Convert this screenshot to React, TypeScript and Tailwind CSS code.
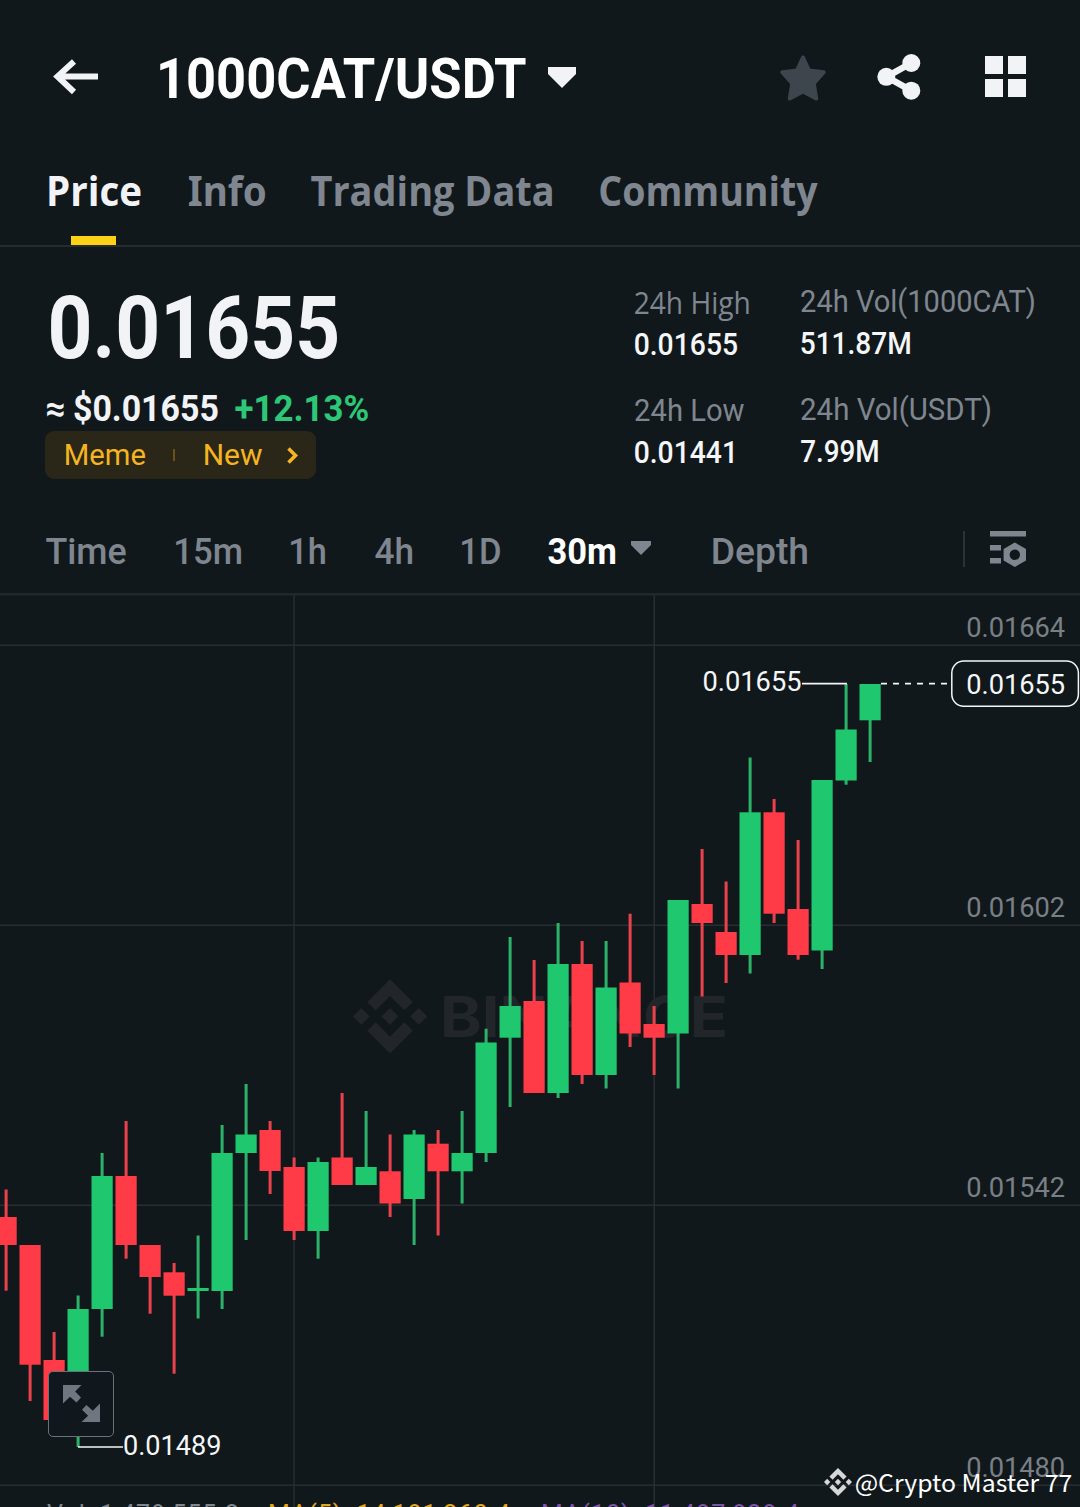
import { useLayoutEffect, useRef, useState } from "react";

/* Single line of text whose glyphs fill an exact width. */
function Fit({ w, className = "", children }: { w: number; className?: string; children: string }) {
  const ref = useRef<HTMLSpanElement>(null);
  const [transform, setTransform] = useState("none");
  useLayoutEffect(() => {
    const el = ref.current;
    const ctx = document.createElement("canvas").getContext("2d");
    if (!el || !ctx) return;
    const s = getComputedStyle(el);
    /* measured at ten times the size, to keep sub-pixel precision */
    ctx.font = `${s.fontWeight} ${parseFloat(s.fontSize) * 10}px ${s.fontFamily}`;
    const m = ctx.measureText(children);
    const left = m.actualBoundingBoxLeft / 10;
    const k = w / (left + m.actualBoundingBoxRight / 10);
    setTransform(`translateX(${left * k}px) scaleX(${k})`);
  }, [w, children]);
  return (
    <span className="block shrink-0" style={{ width: w }}>
      <span ref={ref} className={`inline-block origin-left whitespace-nowrap align-top ${className}`} style={{ transform }}>
        {children}
      </span>
    </span>
  );
}

const LOGO =
  "M16.624 13.9202l2.7175 2.7154-7.353 7.353-7.353-7.352 2.7175-2.7164 4.6355 4.6595 4.6356-4.6595zm4.6366-4.6366L24 12l-2.7154 2.7164L18.5682 12l2.6924-2.7164zm-9.272.001l2.7163 2.6914-2.7164 2.7174v-.001L9.2721 12l2.7164-2.7154zm-9.2722-.001L5.4088 12l-2.6914 2.6924L0 12l2.7164-2.7164zM11.9885.0115l7.353 7.329-2.7174 2.7154-4.6356-4.6356-4.6355 4.6595-2.7174-2.7154 7.353-7.353z";

/* direction, high, body top, body bottom, low */
type Candle = ["u" | "d", number, number, number, number];
const CANDLES: Candle[] = [
  ["d", 1189.5, 1217, 1245, 1290.7],
  ["d", 1245, 1245, 1364.7, 1401],
  ["d", 1332, 1360, 1420, 1420],
  ["u", 1295.5, 1309, 1410, 1447],
  ["u", 1153, 1176, 1309, 1336.7],
  ["d", 1121, 1176, 1245, 1258.7],
  ["d", 1245, 1245, 1277, 1313.7],
  ["d", 1263, 1272.3, 1295.7, 1373.7],
  ["u", 1235.5, 1288, 1291, 1318.5],
  ["u", 1125, 1153, 1291, 1309],
  ["u", 1084, 1134.5, 1153, 1240],
  ["d", 1121, 1130, 1171, 1194],
  ["d", 1157.5, 1167, 1231, 1240],
  ["u", 1157.5, 1162, 1231, 1258.7],
  ["d", 1093, 1157.5, 1185, 1185],
  ["u", 1111, 1167, 1185, 1185],
  ["d", 1134.5, 1171.3, 1203.5, 1217],
  ["u", 1130, 1134.5, 1199, 1245],
  ["d", 1130, 1143.7, 1171.3, 1235.5],
  ["u", 1111, 1153, 1171.3, 1203.5],
  ["u", 1028.7, 1042.5, 1153, 1162],
  ["u", 937, 1006, 1037.7, 1107],
  ["d", 960, 1001, 1093, 1093],
  ["u", 923, 964, 1093, 1098],
  ["d", 941, 964, 1075, 1084],
  ["u", 941, 987.5, 1075, 1088.5],
  ["d", 913.7, 982.5, 1033.5, 1047],
  ["d", 1006, 1024, 1037.7, 1075],
  ["u", 900, 900, 1033.5, 1088.5],
  ["d", 849, 904, 923, 996.5],
  ["d", 881.5, 932, 955, 983],
  ["u", 757.5, 812.3, 955, 973.5],
  ["d", 799, 812.3, 913.7, 923],
  ["d", 840, 909, 955, 959.7],
  ["u", 780, 780, 950.5, 969],
  ["u", 684, 729.5, 780.5, 784.7],
  ["u", 684, 684, 720.3, 762],
];

const AXIS: [string, number][] = [
  ["0.01664", 637],
  ["0.01602", 917],
  ["0.01542", 1197],
  ["0.01480", 1477],
];

function Header() {
  return (
    <header className="flex h-[155px] items-center pl-[53px] pr-[54px] text-[#f1f3f6]">
      <svg className="-mt-px h-9 w-[45px]" viewBox="0 0 45 36" fill="none" stroke="currentColor" strokeWidth="6">
        <path d="M45 17.5H5M21 2.5L4.5 17.5L21 33" />
      </svg>
      <h1 className="ml-[62px] pt-[3px] font-bold text-white">
        <Fit w={366} className="text-[56px] leading-[64px]">1000CAT/USDT</Fit>
      </h1>
      <svg className="ml-[22px] h-[21px] w-7" viewBox="0 0 28 21" fill="currentColor">
        <path d="M0 0H28V7L14 21L0 7Z" />
      </svg>
      <svg className="ml-auto h-[46px] w-[46px] text-[#3e464d]" viewBox="0 0 46 46" fill="currentColor" stroke="currentColor" strokeWidth="4" strokeLinejoin="round">
        <path d="M23 2.5L29 15.5L43.7 17.3L33.8 28.5L36.2 43.5L23 36.5L9.8 43.5L12.2 28.5L2.3 17.3L17 15.5Z" />
      </svg>
      <svg className="-mt-px ml-[51px] h-[46px] w-[44px]" viewBox="0 0 44 46" fill="currentColor">
        <path d="M34.3 9L9.5 22.8L34.3 36.7" fill="none" stroke="currentColor" strokeWidth="6.5" />
        <circle cx="34.3" cy="9" r="9" />
        <circle cx="9.3" cy="22.8" r="9" />
        <circle cx="34.3" cy="36.7" r="9" />
      </svg>
      <div className="-mt-[2px] ml-16 grid w-[41px] grid-cols-2 gap-[5px]">
        <i className="h-[18px] bg-current" />
        <i className="h-[18px] bg-current" />
        <i className="h-[18px] bg-current" />
        <i className="h-[18px] bg-current" />
      </div>
    </header>
  );
}

function Tabs() {
  const tab = "text-[42px] leading-[48px]";
  return (
    <nav className="flex h-[92px] border-b-2 border-[#262b2f] pl-[49px] pt-[11px] font-['Open_Sans',sans-serif] font-bold text-[#7f868f]">
      <div className="w-[92px] text-[#f1f3f6]">
        <Fit w={92} className={tab}>Price</Fit>
        <div className="ml-[22px] mt-[22px] h-[9px] w-[45px] bg-[#fcd116]" />
      </div>
      <div className="ml-12 font-['Noto_Sans',sans-serif]">
        <Fit w={76} className={tab}>Info</Fit>
      </div>
      <div className="ml-[46px]">
        <Fit w={241} className={tab}>Trading Data</Fit>
      </div>
      <div className="ml-12">
        <Fit w={218} className={tab}>Community</Fit>
      </div>
    </nav>
  );
}

function Stat({ label, value, lw, vw, open }: { label: string; value: string; lw: number; vw: number; open?: boolean }) {
  return (
    <div>
      <div className={open ? "-mt-px pb-px font-['Open_Sans',sans-serif] text-[#7f868f]" : "text-[#7f868f]"}>
        <Fit w={lw} className="text-[31px] leading-9">{label}</Fit>
      </div>
      <div className="mt-1.5 font-medium text-[#f4f6f8]">
        <Fit w={vw} className="text-[31px] leading-9">{value}</Fit>
      </div>
    </div>
  );
}

function Summary() {
  return (
    <section className="flex h-[263px] justify-between pl-[45px] pr-[45px]">
      <div className="pt-[38px]">
        <div className="ml-[5px] font-bold text-[#f1f3f6]">
          <Fit w={288} className="text-[87px] leading-[87px]">0.01655</Fit>
        </div>
        <div className="mt-[17px] flex h-10 gap-[17px] pl-[2px] font-bold">
          <div className="flex gap-[10px] text-[#f1f3f6]">
            <Fit w={17} className="text-[36px] leading-10">≈</Fit>
            <Fit w={144} className="text-[36px] leading-10">$0.01655</Fit>
          </div>
          <div className="text-[#2cc878]">
            <Fit w={133} className="text-[36px] leading-10">+12.13%</Fit>
          </div>
        </div>
        <div className="mt-[2px] flex h-12 w-[271px] items-center rounded-[9px] bg-[#2a2718] pl-[21px] text-[#f5b422]">
          <Fit w={79} className="text-[30px] leading-[48px]">Meme</Fit>
          <div className="ml-[28px] h-3 w-[2px] bg-[#6b5219]" />
          <div className="ml-[30px]">
            <Fit w={57} className="text-[30px] leading-[48px]">New</Fit>
          </div>
          <svg className="ml-[25px] h-[17px] w-3" viewBox="0 0 12 17" fill="none" stroke="currentColor" strokeWidth="3.6">
            <path d="M1.5 1.5L8.5 8.5L1.5 15.5" />
          </svg>
        </div>
      </div>
      <div className="flex w-[400px]">
        <div className="flex w-[166px] flex-col gap-[30px] pt-[38px]">
          <Stat label="24h High" value="0.01655" lw={114} vw={102} open />
          <Stat label="24h Low" value="0.01441" lw={109} vw={98} />
        </div>
        <div className="flex flex-col gap-[30px] pt-[37px]">
          <Stat label="24h Vol(1000CAT)" value="511.87M" lw={233} vw={109} />
          <Stat label="24h Vol(USDT)" value="7.99M" lw={189} vw={77} />
        </div>
      </div>
    </section>
  );
}

function Intervals() {
  const t = "text-[36px] leading-[44px]";
  return (
    <div className="flex h-[83px] items-center pl-[46px] pr-[54px] font-medium text-[#7f868f]">
      <div className="flex gap-[50px]">
        <Fit w={80} className={t}>Time</Fit>
        <Fit w={65} className={t}>15m</Fit>
        <Fit w={34} className={t}>1h</Fit>
        <Fit w={37} className={t}>4h</Fit>
        <Fit w={38} className={t}>1D</Fit>
      </div>
      <div className="ml-[48px] font-bold text-white">
        <Fit w={67} className={t}>30m</Fit>
      </div>
      <svg className="-mt-[7px] ml-[16px] h-[14px] w-5" viewBox="0 0 20 14" fill="currentColor">
        <path d="M0 0H20V4L10 14L0 4Z" />
      </svg>
      <div className="ml-[62px]">
        <Fit w={94} className={t}>Depth</Fit>
      </div>
      <div className="-mt-1.5 ml-auto h-9 w-[2px] bg-[#2c3136]" />
      <svg className="-mt-1.5 ml-[25px] h-9 w-9" viewBox="0 0 36 36" fill="currentColor">
        <path d="M0 0H36V5.5H0ZM0 14H11V19.5H0ZM0 27H11V32.5H0Z" />
        <path fillRule="evenodd" d="M24.8 11.5L36 18V29.5L24.8 36L13.6 29.5V18ZM24.8 18.5A5.2 5.2 0 1 0 24.8 28.9A5.2 5.2 0 1 0 24.8 18.5Z" />
      </svg>
    </div>
  );
}

function Chart() {
  return (
    <section className="relative h-[914px] overflow-hidden">
      <svg className="block h-[914px] w-[1080px]" viewBox="0 593 1080 914" fontFamily="Roboto, sans-serif" fontSize="28">
        <rect x="0" y="593" width="1080" height="2.5" fill="#22272b" />
        <g fill="#292d31">
          {[644.5, 924.5, 1204.5, 1484.5].map((y) => (
            <rect key={y} x="0" y={y} width="1080" height="1.5" />
          ))}
          <rect x="293.3" y="595" width="1.5" height="912" />
          <rect x="653.5" y="595" width="1.5" height="912" />
        </g>
        <g fill="#22252a">
          <path d={LOGO} transform="translate(353 979.3) scale(3.09)" />
          <text x="440" y="1037" fontFamily="Inter, sans-serif" fontWeight="700" fontSize="56" textLength="288" lengthAdjust="spacingAndGlyphs">BINANCE</text>
        </g>
        {CANDLES.map(([dir, high, top, bottom, low], i) => (
          <g key={i}>
            <rect x={4.6 + i * 24} y={high} width="3" height={low - high} fill={dir === "u" ? "#2db26a" : "#ea424d"} />
            <rect x={-4.5 + i * 24} y={top} width="21.2" height={bottom - top} fill={dir === "u" ? "#1fc76f" : "#ff3b47"} />
          </g>
        ))}
        <g fill="#7a7f86">
          {AXIS.map(([label, y]) => (
            <text key={label} x="966.2" y={y} textLength="99" lengthAdjust="spacingAndGlyphs">{label}</text>
          ))}
        </g>
        <g fill="#f4f6f8">
          <text x="702.5" y="691" textLength="99" lengthAdjust="spacingAndGlyphs">0.01655</text>
          <text x="123" y="1455" textLength="98.5" lengthAdjust="spacingAndGlyphs">0.01489</text>
          <path d="M802 683.7H847M78 1447H123" stroke="#f4f6f8" strokeWidth="1.7" />
          <path d="M881 683.7H948" stroke="#f4f6f8" strokeWidth="1.7" strokeDasharray="6 6" />
          <rect x="951.8" y="661" width="126.6" height="45.2" rx="12" fill="#11181b" stroke="#f4f6f8" strokeWidth="1.5" />
          <text x="966.2" y="694" textLength="99" lengthAdjust="spacingAndGlyphs">0.01655</text>
        </g>
        <g fontSize="25">
          <text x="47" y="1523.2" fill="#7f868f" textLength="192">Vol: 1,479,555.2</text>
          <text x="268" y="1523.2" fill="#e0a822" textLength="242">MA(5): 14,181,260.4</text>
          <text x="541" y="1523.2" fill="#7d55a8" textLength="258">MA(10): 11,487,828.4</text>
        </g>
      </svg>
      <button className="absolute left-12 top-[777.5px] flex h-[66px] w-[66px] items-center justify-center rounded-[5px] border-[1.5px] border-[#6b717b] bg-[#10171d] text-[#6f7680]">
        <svg className="h-[37px] w-[37px]" viewBox="0 0 36 36" fill="currentColor">
          <path d="M0 0H18L11.8 6.4L17.5 12.2L13.2 17L6.8 11.4L0 18ZM36 36H18L24.4 29.8L18.5 24L22.8 19.4L29 25L36 18Z" />
        </svg>
      </button>
      <div className="absolute bottom-px right-[9px] flex h-12 items-center gap-1 text-white">
        <svg className="h-7 w-7 text-[#d6d7d8]" viewBox="0 0 24 24" fill="currentColor">
          <path d={LOGO} />
        </svg>
        <div className="font-['Noto_Sans_CJK_SC',sans-serif]">
          <Fit w={215} className="text-[24px] leading-[48px]">@Crypto Master 77</Fit>
        </div>
      </div>
    </section>
  );
}

export default function App() {
  return (
    <main className="h-[1507px] w-[1080px] overflow-hidden bg-[#11181b] font-[Roboto,sans-serif]">
      <Header />
      <Tabs />
      <Summary />
      <Intervals />
      <Chart />
    </main>
  );
}
